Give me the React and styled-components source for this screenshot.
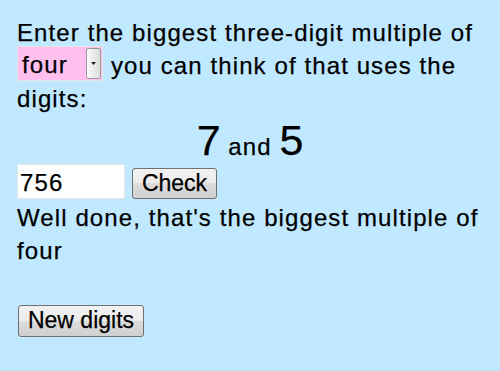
import React, { useState } from "react";
import styled, { createGlobalStyle } from "styled-components";

const Global = createGlobalStyle`
  html, body {
    margin: 0;
    padding: 0;
    background: #c0e8ff;
  }
  body {
    font-family: "Liberation Sans", Arial, sans-serif;
    color: #000;
  }
`;

const Page = styled.div`
  width: 500px;
  height: 371px;
  box-sizing: border-box;
  padding: 16px 17px 0 17px;
  background: #c0e8ff;
  font-size: 24px;
  line-height: 33px;
  letter-spacing: 1.1px;
  -webkit-text-stroke: 0.25px #000;
`;

const Prompt = styled.div`
  margin: 0;
`;

const SelectWrap = styled.span`
  display: inline-flex;
  vertical-align: top;
  margin: -3px 8px 0 0;
  height: 35px;
  width: 86px;
  box-sizing: border-box;
  border: 1px solid #e6e6e6;
  background: #ffc0f0;
`;

const SelectText = styled.span`
  flex: 1;
  padding: 2px 0 0 4px;
  line-height: 31px;
  font-size: 24px;
`;

const Arrow = styled.span`
  width: 15px;
  margin: 1px;
  box-sizing: border-box;
  border: 1px solid #9a9a9a;
  border-radius: 2px;
  background: linear-gradient(90deg, #fafafa, #dcdcdc);
  display: flex;
  align-items: center;
  justify-content: center;
  -webkit-text-stroke: 0;
`;

const Digits = styled.div`
  text-align: center;
  margin-top: 10px;
  line-height: 30px;
`;

const Big = styled.span`
  font-size: 43px;
  letter-spacing: 0;
`;

const Row = styled.div`
  display: flex;
  align-items: flex-end;
  gap: 7px;
  margin-top: 2px;
  height: 35px;
`;

const Answer = styled.input`
  width: 108px;
  height: 35px;
  box-sizing: border-box;
  border: 1px solid #e4e4e4;
  background: #fff;
  font-family: "Liberation Sans", Arial, sans-serif;
  font-size: 24px;
  letter-spacing: 1.1px;
  -webkit-text-stroke: 0.25px #000;
  padding: 2px 2px 0 2px;
  outline: none;
`;

const Button = styled.button`
  width: ${(p) => p.$w}px;
  height: ${(p) => p.$h}px;
  padding: 0;
  box-sizing: border-box;
  border: 1px solid #707070;
  border-radius: 3px;
  background: linear-gradient(#f2f2f2 0%, #ebebeb 50%, #dddddd 50%, #cfcfcf 100%);
  font-family: "Liberation Sans", Arial, sans-serif;
  font-size: 23px;
  letter-spacing: 0;
  -webkit-text-stroke: 0.25px #000;
  color: #000;
  line-height: 1;
`;

const Feedback = styled.div`
  margin-top: 2px;
  line-height: 33px;
`;

const Footer = styled.div`
  margin-top: 36px;
  padding-left: 1px;
`;

export default function App() {
  const [value, setValue] = useState("756");
  return (
    <Page>
      <Global />
      <Prompt>
        Enter the biggest three-digit multiple of
        <br />
        <SelectWrap>
          <SelectText>four</SelectText>
          <Arrow>
            <svg width="5" height="3" viewBox="0 0 5 3">
              <path d="M0 0H5L2.5 3Z" fill="#222" />
            </svg>
          </Arrow>
        </SelectWrap>
        you can think of that uses the
        <br />
        digits:
      </Prompt>
      <Digits>
        <Big>7</Big> and <Big>5</Big>
      </Digits>
      <Row>
        <Answer value={value} onChange={(e) => setValue(e.target.value)} />
        <Button $w={85} $h={31}>Check</Button>
      </Row>
      <Feedback>
        Well done, that's the biggest multiple of
        <br />
        four
      </Feedback>
      <Footer>
        <Button $w={126} $h={32}>New digits</Button>
      </Footer>
    </Page>
  );
}
